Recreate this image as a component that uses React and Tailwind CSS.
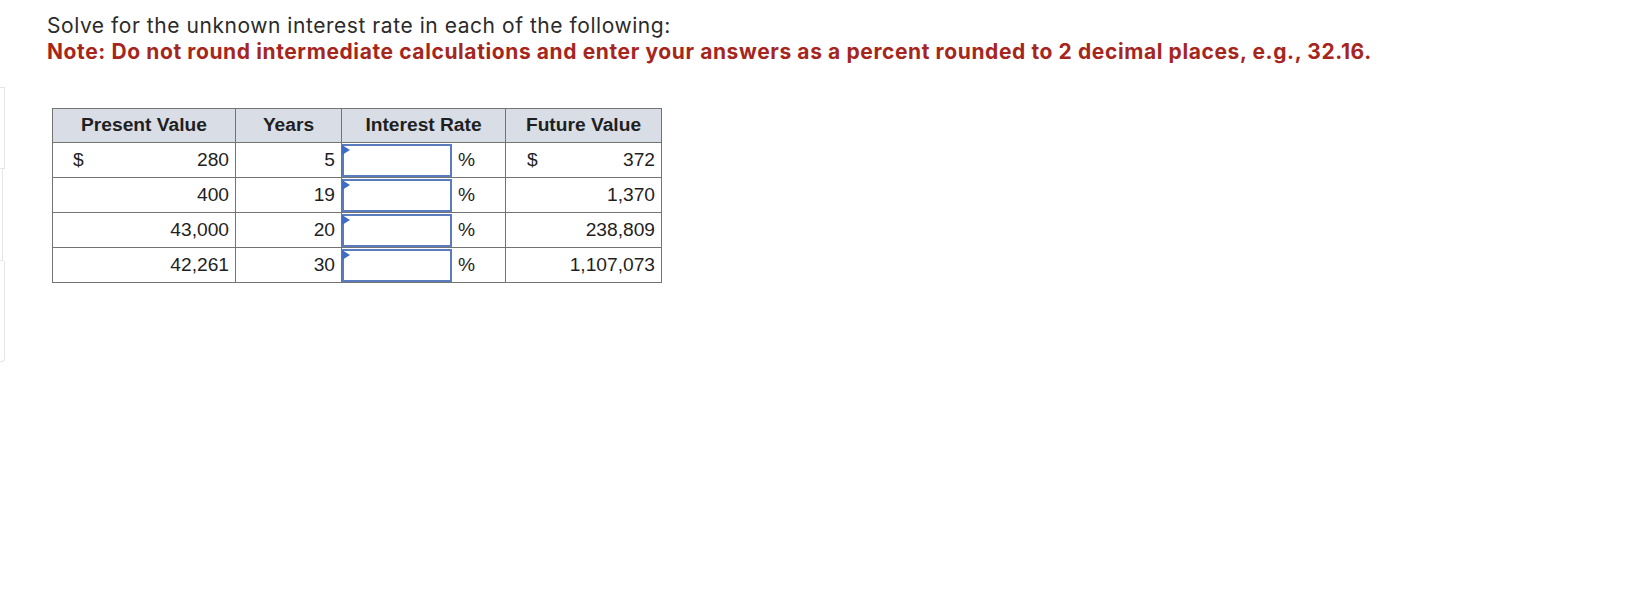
import React from "react";

const rows = [
  { pv: "280", n: "5", fv: "372", dollar: true },
  { pv: "400", n: "19", fv: "1,370" },
  { pv: "43,000", n: "20", fv: "238,809" },
  { pv: "42,261", n: "30", fv: "1,107,073" },
];

function Triangle() {
  return (
    <span className="absolute left-[-2px] top-[-1px] z-10 block w-0 h-0 border-t-[5px] border-b-[5px] border-t-transparent border-b-transparent border-l-[8px] border-l-[#3f6cc4]" />
  );
}

const cell = "border border-[#737373]";

export default function App() {
  return (
    <div className="flex w-[1638px] h-[592px] bg-white overflow-hidden">
      <div className="flex flex-col w-[5px] pt-[87px] shrink-0">
        <div className="h-[82px] border border-l-0 border-[#e6e6e6]" />
        <div className="h-[92px] w-[3px] border border-l-0 border-t-0 border-[#e6e6e6]" />
        <div className="h-[101px] border border-l-0 border-t-0 border-[#e6e6e6] rounded-br-[4px]" />
      </div>
      <div className="flex flex-col items-start pl-[42px] pt-[13px]">
        <p
          className="text-[21px] leading-[26px] tracking-[0.55px] text-[#2b2b2b] whitespace-nowrap"
          style={{ fontFamily: '"Inter", sans-serif' }}
        >
          Solve for the unknown interest rate in each of the following:
        </p>
        <p
          className="text-[21px] leading-[26px] tracking-[0.6px] font-bold text-[#a6261e] whitespace-nowrap"
          style={{ fontFamily: '"Inter", sans-serif' }}
        >
          Note: Do not round intermediate calculations and enter your answers as a percent rounded to 2 decimal places, e.g., 32.16.
        </p>
        <table
          className="mt-[43px] ml-[5px] w-[609px] table-fixed border-collapse text-[19.2px] text-[#1f1f1f]"
          style={{ fontFamily: '"Liberation Sans", Arial, sans-serif' }}
        >
          <colgroup>
            <col className="w-[183px]" />
            <col className="w-[106px]" />
            <col className="w-[164px]" />
            <col className="w-[156px]" />
          </colgroup>
          <thead>
            <tr className="h-[34px] bg-[#d9dde6]">
              <th className={`${cell} font-bold`}>Present Value</th>
              <th className={`${cell} font-bold`}>Years</th>
              <th className={`${cell} font-bold`}>Interest Rate</th>
              <th className={`${cell} font-bold`}>Future Value</th>
            </tr>
          </thead>
          <tbody>
            {rows.map((r, i) => (
              <tr key={i} className="h-[34.5px]">
                <td className={`${cell} pl-[20px] pr-[6px]`}>
                  <div className="flex justify-between">
                    <span>{r.dollar ? "$" : ""}</span>
                    <span>{r.pv}</span>
                  </div>
                </td>
                <td className={`${cell} pr-[6px] text-right`}>{r.n}</td>
                <td className={`${cell} p-0`}>
                  <div className="flex items-center h-[34px]">
                    <div className="relative w-[110px] h-[33px] border-2 border-[#5a7bbd] bg-white">
                      <Triangle />
                    </div>
                    <span className="ml-[6px]">%</span>
                  </div>
                </td>
                <td className={`${cell} pl-[21px] pr-[6px]`}>
                  <div className="flex justify-between">
                    <span>{r.dollar ? "$" : ""}</span>
                    <span>{r.fv}</span>
                  </div>
                </td>
              </tr>
            ))}
          </tbody>
        </table>
      </div>
    </div>
  );
}
